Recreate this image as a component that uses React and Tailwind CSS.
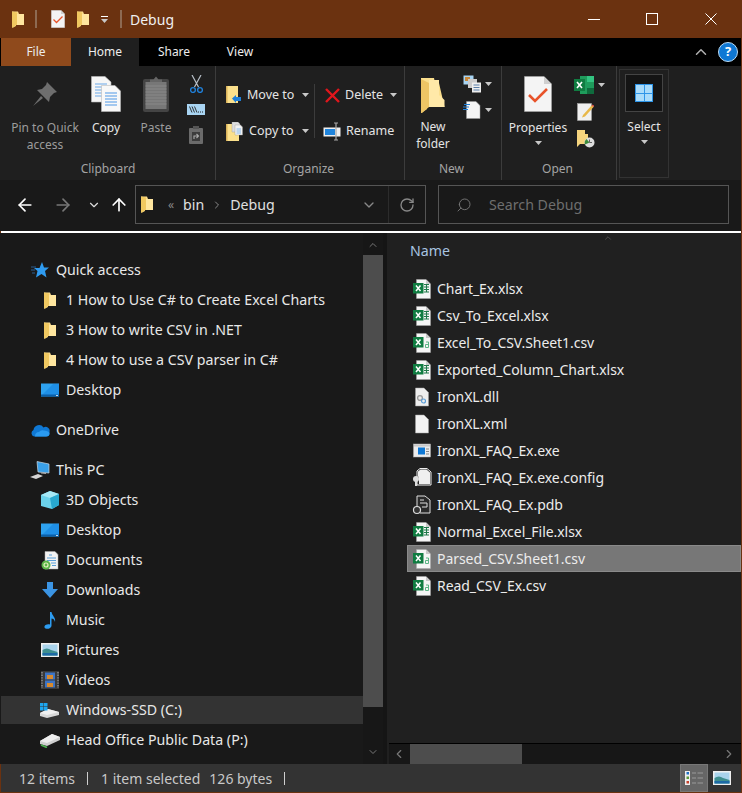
import { ChevronDown, ChevronUp, ChevronLeft, ChevronRight, ArrowLeft, ArrowRight, ArrowUp, RotateCw, Search } from 'lucide-react';

const FONT = "font-['Noto_Sans',sans-serif]";

// small icons
const Folder = ({ className = 'w-[12px] h-[17px]' }) => (
  <svg viewBox="0 0 12 17" className={className}>
    <path d="M0 0.5 H6 L7 3 H12 V14 H4 V15 L1 16.5 H0 Z" fill="#fbdc8a" />
    <path d="M0 0.5 L5 1.5 V13.5 L1 16.5 H0 Z" fill="#f0c860" />
    <path d="M5 3 H12 V14 H5 Z" fill="#ffe69f" />
  </svg>
);

const Caret = ({ className = '' }) => (
  <svg viewBox="0 0 7 4" className={`w-[7px] h-[4px] ${className}`}>
    <path d="M0 0 H7 L3.5 4 Z" fill="#c8c8c8" />
  </svg>
);

const ExcelFile = ({ csv }) => (
  <svg viewBox="0 0 18 20" className="w-[18px] h-[20px]">
    <path d="M3.5 0.5 H13 L17.5 5 V19.5 H3.5 Z" fill="#f5f5f5" stroke="#a8a8a8" strokeWidth="0.5" />
    <path d="M13 0.5 V5 H17.5 Z" fill="#c8c8c8" />
    {csv ? (
      <path d="M13 9 H15.5 V14.5 H12.5 V11.5 H15.5" fill="none" stroke="#5cb585" strokeWidth="1" />
    ) : (
      <path d="M11 5.5 H16 M11 8 H16 M11 10.5 H16 M11 13 H16 M13.5 5.5 V13" stroke="#21794a" strokeWidth="1.1" fill="none" />
    )}
    <rect x="0" y="4" width="10.5" height="10.5" fill="#107c41" />
    <path d="M3 6.5 L7.5 12 M7.5 6.5 L3 12" stroke="#fff" strokeWidth="1.5" />
  </svg>
);

const DllFile = () => (
  <svg viewBox="0 0 18 20" className="w-[18px] h-[20px]">
    <path d="M2.5 1 H11 L15.5 5.5 V19 H2.5 Z" fill="#eeeeee" stroke="#a0a0a0" strokeWidth="0.5" />
    <circle cx="7" cy="11" r="2.4" fill="none" stroke="#9a9a9a" strokeWidth="1.3" />
    <circle cx="10.5" cy="14" r="2" fill="none" stroke="#5c9fd8" strokeWidth="1.2" />
  </svg>
);

const BlankFile = () => (
  <svg viewBox="0 0 18 20" className="w-[18px] h-[20px]">
    <path d="M2.5 1 H11 L15.5 5.5 V19 H2.5 Z" fill="#f2f2f2" stroke="#a0a0a0" strokeWidth="0.5" />
  </svg>
);

const ExeFile = () => (
  <svg viewBox="0 0 18 20" className="w-[18px] h-[20px]">
    <rect x="0.5" y="3" width="17" height="13" fill="#ececec" stroke="#b0b0b0" strokeWidth="0.5" />
    <rect x="1" y="3.5" width="16" height="2" fill="#c8c8c8" />
    <rect x="5" y="6.5" width="7" height="7" fill="#0f78d4" />
    <path d="M13 8 H16 M13 10.5 H16 M13 13 H16" stroke="#888" />
  </svg>
);

const ConfigFile = () => (
  <svg viewBox="0 0 20 20" className="w-[20px] h-[20px]">
    <path d="M5 10 V3 L8 0.5 H15 L19 4 V17 H5 Z" fill="#222" stroke="#eee" strokeWidth="1" />
    <path d="M6 8 V3.5 L8.5 1.5 H14.5 L18 4.5 V16 H7 V11 Z" fill="#efefef" />
    <circle cx="4" cy="11" r="3" fill="#ddd" />
    <rect x="3" y="12" width="2" height="6" fill="#ddd" />
  </svg>
);

const PdbFile = () => (
  <svg viewBox="0 0 20 20" className="w-[20px] h-[20px]">
    <path d="M5 13 V1 H13 L18 5 V18 H8" fill="#2a2a2a" stroke="#ddd" strokeWidth="1" />
    <path d="M8 5 H12 M8 8 H15 V12 H10" stroke="#ddd" strokeWidth="1" fill="none" />
    <circle cx="5" cy="15" r="3.5" fill="#333" stroke="#ddd" strokeWidth="1.2" />
  </svg>
);

const Star = () => (
  <svg viewBox="0 0 18 16" className="w-[18px] h-[16px]">
    <path d="M11 0 L13 5.5 H18 L14 9 L15.5 15.5 L10.5 12 L5 15.5 L6.5 9 L3 6 H8.5 Z" fill="#2f9bf0" />
    <path d="M0 5 H5 M0 8 H4 M1 11 H4" stroke="#2f6fb0" strokeWidth="0.8" />
  </svg>
);

const DesktopIcon = () => (
  <svg viewBox="0 0 18 14" className="w-[18px] h-[14px]">
    <rect width="18" height="13" y="0.5" fill="#2ea2f0" />
    <path d="M0 13 L12 1 H18 V13 Z" fill="#1f8fe6" />
    <rect y="11.5" width="18" height="2" fill="#0a5ea8" />
    <path d="M15 12.5 H17" stroke="#fff" strokeWidth="0.8" />
  </svg>
);

const Cloud = () => (
  <svg viewBox="0 0 20 13" className="w-[20px] h-[13px]">
    <path d="M4 12.5 A3.5 3.5 0 0 1 3.5 6 A5.5 5.5 0 0 1 13.5 3.5 A4 4 0 0 1 19.5 8 Q20 12.5 16 12.5 Z" fill="#0f78d4" />
    <path d="M5 12.5 Q5 8 9 8 Q11 5.5 14 6.5 Q20 7 19.5 10 Q19 12.5 16 12.5 Z" fill="#2a9af0" />
  </svg>
);

const PcIcon = () => (
  <svg viewBox="0 0 20 18" className="w-[20px] h-[18px]">
    <path d="M7 0.5 L19 3 V12 L8 11 Z" fill="#3aa0e8" stroke="#cfd8e0" strokeWidth="0.7" />
    <path d="M0 16 L8 13 L13 15 L6 18 Z" fill="#d5d5d5" />
    <path d="M11 12 L16 12.5" stroke="#aaa" />
  </svg>
);

const CubeIcon = () => (
  <svg viewBox="0 0 18 18" className="w-[18px] h-[18px]">
    <path d="M9 0 L18 3 V14 L11 18 L0 15 V4 Z" fill="#6bd2ea" />
    <path d="M0 4 L9 7 L18 3 L9 0 Z" fill="#a6e8f5" />
    <path d="M9 7 L18 3 V14 L11 18 Z" fill="#28a8cf" />
  </svg>
);

const DocumentsIcon = () => (
  <svg viewBox="0 0 18 19" className="w-[18px] h-[19px]">
    <path d="M4 0.5 H14 L17 3.5 V18 H4 Z" fill="#f2f2f2" stroke="#aaa" strokeWidth="0.5" />
    <path d="M8 4 H11 M6 7 H15 M6 9.5 H15 M10 12 H15 M11 14.5 H15" stroke="#5a9fd8" strokeWidth="1.1" />
    <circle cx="5" cy="14" r="4.5" fill="#5ab54a" />
    <circle cx="5" cy="14" r="2" fill="none" stroke="#e4f2c0" strokeWidth="1.2" />
  </svg>
);

const DownloadsIcon = () => (
  <svg viewBox="0 0 16 16" className="w-[16px] h-[16px]">
    <path d="M5 0 H11 V7 H16 L8 16 L0 7 H5 Z" fill="#3b94e3" />
  </svg>
);

const MusicIcon = () => (
  <svg viewBox="0 0 12 17" className="w-[12px] h-[17px]">
    <path d="M6 0 H7.5 C8 4 12 5 11 10 C10.5 7.5 9 6.5 7.5 6.5 V13.5 C7.5 16 4.5 17 2.5 16.8 C0 16.5 0 14 1.5 13 C3 12 5 12 6 12.5 Z" fill="#2d9cf0" />
  </svg>
);

const PictureIcon = ({ className = 'w-[18px] h-[14px]' }) => (
  <svg viewBox="0 0 18 14" className={className}>
    <rect width="18" height="14" fill="#f0f0f0" />
    <rect x="1.5" y="1.5" width="15" height="11" fill="#a9d3ec" />
    <path d="M1.5 7 Q6 4 10 7 L16.5 9 V12.5 H1.5 Z" fill="#3f8f8f" />
    <path d="M1.5 10 L16.5 10 V12.5 H1.5 Z" fill="#1d6aa6" />
  </svg>
);

const VideoIcon = () => (
  <svg viewBox="0 0 18 18" className="w-[18px] h-[18px]">
    <rect width="18" height="18" fill="#3a3a3a" />
    <path d="M1 1 V17 M17 1 V17" stroke="#888" strokeWidth="1.6" strokeDasharray="1.4 1.2" />
    <rect x="4" y="1.5" width="10" height="7" fill="#3d74c4" />
    <rect x="4" y="9.5" width="10" height="7" fill="#3d74c4" />
    <rect x="6" y="4" width="6" height="4" fill="#d98a2c" />
    <rect x="6" y="12" width="6" height="4" fill="#d98a2c" />
  </svg>
);

const DriveC = () => (
  <svg viewBox="0 0 20 15" className="w-[20px] h-[15px]">
    <path d="M0 10 L8 6 L19 9 V12 L7 15 L0 13 Z" fill="#d8d8d8" />
    <path d="M0 10 L7 12 L19 9 L8 6 Z" fill="#f0f0f0" />
    <rect x="0" y="0" width="3.5" height="3.5" fill="#1ea6ef" />
    <rect x="4" y="0" width="3.5" height="3.5" fill="#1ea6ef" />
    <rect x="0" y="4" width="3.5" height="3.5" fill="#1ea6ef" />
    <rect x="4" y="4" width="3.5" height="3.5" fill="#1ea6ef" />
  </svg>
);

const DriveP = () => (
  <svg viewBox="0 0 20 15" className="w-[20px] h-[15px]">
    <path d="M0 8 L12 1 L20 4 V7 L7 13 L0 11 Z" fill="#cfcfcf" />
    <path d="M0 8 L7 10 L20 4 L12 1 Z" fill="#eeeeee" />
    <path d="M1 12 L7 14.5" stroke="#4caf50" strokeWidth="1.8" />
  </svg>
);

// ribbon icons
const PinIcon = () => (
  <svg viewBox="0 0 26 26" className="w-[26px] h-[26px]">
    <path d="M15 1 L25 11 L22 12 L18 16 L17 21 L5 9 L10 8 L14 4 Z M9 15 L11 17 L1 25 Z" fill="#6e6e6e" />
  </svg>
);

const CopyIcon = () => (
  <svg viewBox="0 0 30 36" className="w-[30px] h-[36px]">
    <path d="M0.5 0.5 H14 L20 6 V26 H0.5 Z" fill="#f6f6f6" stroke="#bbb" strokeWidth="0.6" />
    <path d="M4 8 H16 M4 11 H16 M4 14 H16 M4 17 H16 M4 20 H16" stroke="#6aa8e8" strokeWidth="1.2" />
    <path d="M10.5 9.5 H24 L29.5 15 V35.5 H10.5 Z" fill="#f8f8f8" stroke="#bbb" strokeWidth="0.6" />
    <path d="M14 17 H26 M14 20 H26 M14 23 H26 M14 26 H26 M14 29 H26" stroke="#4f97e6" strokeWidth="1.2" />
  </svg>
);

const PasteIcon = () => (
  <svg viewBox="0 0 26 36" className="w-[26px] h-[36px]">
    <rect x="0" y="3" width="26" height="33" rx="2" fill="#444" />
    <rect x="2.5" y="6" width="21" height="27" fill="#777" />
    <path d="M2.5 10 H23.5 M2.5 13 H23.5 M2.5 16 H23.5 M2.5 19 H23.5 M2.5 22 H23.5 M2.5 25 H23.5 M2.5 28 H23.5" stroke="#8a8a8a" />
    <path d="M7 6 V3.5 H10.5 L13 0.5 L15.5 3.5 H19 V6 Z" fill="#666" />
  </svg>
);

const CutIcon = () => (
  <svg viewBox="0 0 13 18" className="w-[13px] h-[18px]">
    <path d="M2 0 L8.5 12 M11 0 L4.5 12" stroke="#b8c0c8" strokeWidth="1.2" />
    <circle cx="3" cy="15" r="2.4" fill="none" stroke="#1f7fd8" strokeWidth="1.4" />
    <circle cx="10" cy="15" r="2.4" fill="none" stroke="#1f7fd8" strokeWidth="1.4" />
  </svg>
);

const CopyPathIcon = () => (
  <svg viewBox="0 0 18 11" className="w-[18px] h-[11px]">
    <rect width="18" height="11" fill="#a8d4f2" />
    <path d="M2.5 2.5 L5 8.5 M5 2.5 L7.5 8.5 M7.5 2.5 L10 8.5" stroke="#222" strokeWidth="0.9" />
    <path d="M11 8 H12 M13 8 H14 M15 8 H16" stroke="#222" />
  </svg>
);

const PasteShortcutIcon = () => (
  <svg viewBox="0 0 14 18" className="w-[14px] h-[18px]">
    <rect y="2" width="14" height="16" rx="1" fill="#6b6b6b" />
    <rect x="4" y="0" width="6" height="3" fill="#555" />
    <rect x="3" y="6" width="8" height="9" fill="#3c3c3c" />
    <path d="M5 13 V10 H9 M7.5 8 L9.5 10 L7.5 12" stroke="#aaa" strokeWidth="1.1" fill="none" />
  </svg>
);

const MoveToIcon = () => (
  <svg viewBox="0 0 15 18" className="w-[15px] h-[18px]">
    <path d="M0 0 H12 V17 H0 Z" fill="#fbe08c" />
    <path d="M0 0 H1.5 V17 H0 Z" fill="#d9b25a" />
    <path d="M6 12.5 L10 9 V11 H15 V15 H10 V17 Z" fill="#1f7fd8" />
  </svg>
);

const CopyToIcon = () => (
  <svg viewBox="0 0 17 19" className="w-[17px] h-[19px]">
    <path d="M0 2 H13 V19 H0 Z" fill="#fbe08c" />
    <path d="M0 2 H1.5 V19 H0 Z" fill="#d9b25a" />
    <path d="M6 0 H12 L14 2 V10 H6 Z" fill="#ddd" stroke="#999" strokeWidth="0.4" />
    <path d="M9 3 H14.5 L16.5 5 V13 H9 Z" fill="#f2f2f2" stroke="#999" strokeWidth="0.4" />
    <path d="M10.5 7 H15 M10.5 9 H15 M10.5 11 H15" stroke="#6aa8e8" strokeWidth="0.8" />
  </svg>
);

const DeleteIcon = () => (
  <svg viewBox="0 0 15 15" className="w-[15px] h-[15px]">
    <path d="M1 1 L14 14 M14 1 L1 14" stroke="#e0161c" strokeWidth="2.4" />
  </svg>
);

const RenameIcon = () => (
  <svg viewBox="0 0 18 19" className="w-[18px] h-[19px]">
    <rect x="0.5" y="5.5" width="17" height="9" fill="#efefef" />
    <rect x="2" y="7" width="10" height="6" fill="#1f84dc" />
    <path d="M11 1 H15 M13 1 V18 M11 18 H15" stroke="#a8a8a8" strokeWidth="1.2" />
  </svg>
);

const NewFolderIcon = () => (
  <svg viewBox="0 0 24 36" className="w-[24px] h-[36px] mt-[5px]">
    <path d="M0 0 H13 L14 5 H18 L23.5 29 H6 V31 L0 35 Z" fill="#fbdf8e" />
    <path d="M0 1 L8 5 V29 L1 35 H0 Z" fill="#eec565" />
    <path d="M8 2 H18 V17 L23.5 22 V29 H8 Z" fill="#ffe9a8" />
  </svg>
);

const NewItemIcon = () => (
  <svg viewBox="0 0 18 18" className="w-[18px] h-[18px]">
    <rect x="0.5" y="0.5" width="10" height="9" fill="#a8d4f2" />
    <rect x="2" y="2" width="5" height="4" fill="#c7883a" />
    <rect x="5" y="4" width="9" height="9" fill="#ccc" />
    <rect x="9" y="7.5" width="9" height="10" fill="#eee" />
    <path d="M10.5 10 H16.5 M10.5 12.5 H16.5 M10.5 15 H16.5" stroke="#5a7fa8" />
  </svg>
);

const EasyAccessIcon = () => (
  <svg viewBox="0 0 18 18" className="w-[18px] h-[18px]">
    <path d="M3.5 0.5 H13 L17 4.5 V17.5 H3.5 Z" fill="#f4f4f4" stroke="#999" strokeWidth="0.5" />
    <path d="M1 3.5 H7 M0 6 H6 M0 8.5 H5" stroke="#1f7fd8" strokeWidth="1.1" />
  </svg>
);

const PropertiesIcon = ({ className = 'w-[28px] h-[36px]' }) => (
  <svg viewBox="0 0 28 36" className={className}>
    <path d="M0.5 0.5 H20 L27.5 8 V35.5 H0.5 Z" fill="#f4f4f4" stroke="#aaa" strokeWidth="0.6" />
    <path d="M20 0.5 V8 H27.5 Z" fill="#cfcfcf" />
    <path d="M5 19 L11 25 L23 13" fill="none" stroke="#e8532a" strokeWidth="2.6" />
  </svg>
);

const ExcelApp = () => (
  <svg viewBox="0 0 20 18" className="w-[20px] h-[18px]">
    <rect x="6" y="0" width="14" height="18" fill="#1f9c5c" />
    <rect x="13" y="0" width="7" height="6" fill="#33c481" />
    <rect x="13" y="12" width="7" height="6" fill="#0f6b3d" />
    <rect x="0" y="3" width="11" height="12" fill="#107c41" />
    <path d="M3 6 L8 12 M8 6 L3 12" stroke="#fff" strokeWidth="1.6" />
  </svg>
);

const EditIcon = () => (
  <svg viewBox="0 0 17 18" className="w-[17px] h-[18px]">
    <rect x="0.5" y="0.5" width="14" height="17" fill="#f0f0f0" stroke="#aaa" strokeWidth="0.5" />
    <path d="M6 12 L15 2 L17 3.5 L8 13.5 L5 14.5 Z" fill="#e8b84a" />
    <path d="M15 2 L17 3.5" stroke="#d9534f" strokeWidth="1.5" />
  </svg>
);

const HistoryIcon = () => (
  <svg viewBox="0 0 18 18" className="w-[18px] h-[18px]">
    <path d="M0 0 H8 V4 H11 V14 H3 L0 17 Z" fill="#f5d47e" />
    <circle cx="12.5" cy="12.5" r="5" fill="#ddd" />
    <path d="M9.5 9 A5 5 0 0 0 8 14.5 L12.5 12.5 Z" fill="#3a8a3a" />
    <path d="M12.5 9.5 V12.5 H15" stroke="#555" strokeWidth="0.9" fill="none" />
  </svg>
);

const SelectIcon = () => (
  <div className="grid grid-cols-2 gap-px w-[18px] h-[18px] bg-[#2e95e8] p-px">
    <span className="bg-[#a9dbfa]" />
    <span className="bg-[#a9dbfa]" />
    <span className="bg-[#a9dbfa]" />
    <span className="bg-[#a9dbfa]" />
  </div>
);

const DetailsViewIcon = () => (
  <svg viewBox="0 0 18 14" className="w-[18px] h-[14px]">
    <rect width="5" height="14" fill="#eee" />
    <rect x="1.5" y="1" width="2.5" height="2.5" fill="#1f6fc4" />
    <rect x="1.5" y="5.5" width="2.5" height="2.5" fill="#5a9a3a" />
    <rect x="1.5" y="10" width="2.5" height="2.5" fill="#c8402a" />
    <path d="M7 2 H11 M12.5 2 H18 M7 7 H11 M12.5 7 H18 M7 12 H11 M12.5 12 H18" stroke="#9a9a9a" />
  </svg>
);

const CloseGlyph = () => (
  <svg viewBox="0 0 12 12" className="w-[12px] h-[12px]">
    <path d="M0.5 0.5 L11.5 11.5 M11.5 0.5 L0.5 11.5" stroke="#fff" strokeWidth="1" />
  </svg>
);

const LargeButton = ({ icon, label, width, muted, caret }) => (
  <div className={`flex flex-col items-center shrink-0 ${width}`}>
    <div className="h-[46px] pb-[4px] flex items-center justify-center">{icon}</div>
    <div className={`text-[12px] leading-[17px] text-center ${muted ? 'text-[#9c9c9c]' : 'text-[#e4e4e4]'}`}>
      {label}
    </div>
    {caret && <Caret className="mt-[5px]" />}
  </div>
);

const RibbonGroup = ({ label, width, children, labelClass = 'pr-[3px]' }) => (
  <div className={`flex flex-col shrink-0 h-full border-r border-[#3c3c3c] ${width}`}>
    <div className="flex-1 flex min-h-0 pt-[7px]">{children}</div>
    <div className={`h-[19px] mb-[2px] text-[12px] leading-[19px] text-center text-[#a4a4a4] ${labelClass}`}>{label}</div>
  </div>
);

const navTop = [
  { label: 'Quick access', icon: <Star />, top: true },
  { label: '1 How to Use C# to Create Excel Charts', icon: <Folder /> },
  { label: '3 How to write CSV in .NET', icon: <Folder /> },
  { label: '4 How to use a CSV parser in C#', icon: <Folder /> },
  { label: 'Desktop', icon: <DesktopIcon /> },
];

const navPc = [
  { label: '3D Objects', icon: <CubeIcon /> },
  { label: 'Desktop', icon: <DesktopIcon /> },
  { label: 'Documents', icon: <DocumentsIcon /> },
  { label: 'Downloads', icon: <DownloadsIcon /> },
  { label: 'Music', icon: <MusicIcon /> },
  { label: 'Pictures', icon: <PictureIcon /> },
  { label: 'Videos', icon: <VideoIcon /> },
  { label: 'Windows-SSD (C:)', icon: <DriveC />, active: true },
  { label: 'Head Office Public Data (P:)', icon: <DriveP /> },
];

const files = [
  { name: 'Chart_Ex.xlsx', icon: <ExcelFile /> },
  { name: 'Csv_To_Excel.xlsx', icon: <ExcelFile /> },
  { name: 'Excel_To_CSV.Sheet1.csv', icon: <ExcelFile csv /> },
  { name: 'Exported_Column_Chart.xlsx', icon: <ExcelFile /> },
  { name: 'IronXL.dll', icon: <DllFile /> },
  { name: 'IronXL.xml', icon: <BlankFile /> },
  { name: 'IronXL_FAQ_Ex.exe', icon: <ExeFile /> },
  { name: 'IronXL_FAQ_Ex.exe.config', icon: <ConfigFile /> },
  { name: 'IronXL_FAQ_Ex.pdb', icon: <PdbFile /> },
  { name: 'Normal_Excel_File.xlsx', icon: <ExcelFile /> },
  { name: 'Parsed_CSV.Sheet1.csv', icon: <ExcelFile csv />, selected: true },
  { name: 'Read_CSV_Ex.csv', icon: <ExcelFile csv /> },
];

const NavRow = ({ item }) => (
  <div className={`flex items-center ${item.active ? 'h-[28px] my-px bg-[#333333]' : 'h-[30px]'} ${item.top ? 'pl-[29px]' : 'pl-[39px]'}`}>
    <div className="w-[20px] flex justify-center shrink-0">{item.icon}</div>
    <span className="ml-[6px] text-[14.2px] text-[#e8e8e8] whitespace-nowrap">{item.label}</span>
  </div>
);

export default function App() {
  return (
    <div className={`w-[742px] h-[793px] bg-[#6b3210] flex flex-col overflow-hidden pb-px pr-px ${FONT}`}>
      {/* Title bar */}
      <div className="h-[38px] shrink-0 flex items-center pl-[12px] text-[#f0f0f0]">
        <Folder />
        <div className="w-[2px] h-[18px] bg-[#8d6a52] ml-[11px]" />
        <PropertiesIcon className="w-[14px] h-[18px] ml-[14px]" />
        <div className="ml-[12px]"><Folder /></div>
        <div className="ml-[12px] flex flex-col items-center gap-[2px]">
          <div className="w-[7px] h-px bg-white" />
          <Caret />
        </div>
        <div className="w-[2px] h-[18px] bg-[#8d6a52] ml-[12px]" />
        <span className="ml-[8px] text-[14px]">Debug</span>
        <div className="ml-auto flex items-center pr-[24px]">
          <div className="w-[12px] h-px bg-white" />
          <div className="w-[12px] h-[12px] border border-white ml-[46px]" />
          <div className="ml-[47px]"><CloseGlyph /></div>
        </div>
      </div>

      {/* Tabs */}
      <div className="h-[28px] shrink-0 bg-black flex items-stretch pl-px text-[12px] text-[#ededed]">
        <div className="w-[70px] bg-[#8f4a1c] flex items-center justify-center">File</div>
        <div className="w-[68px] bg-[#1f1f1f] flex items-center justify-center">Home</div>
        <div className="w-[70px] flex items-center justify-center">Share</div>
        <div className="w-[62px] flex items-center justify-center">View</div>
        <div className="ml-auto flex items-center pr-[3px] gap-[8px]">
          <ChevronUp className="w-[18px] h-[18px] text-[#b0b0b0]" />
          <div className="w-[20px] h-[20px] rounded-full bg-[#0f78d4] border border-[#bcdcf5] flex items-center justify-center text-white text-[13px] font-bold">?</div>
        </div>
      </div>

      {/* Ribbon */}
      <div className="h-[114px] shrink-0 bg-[#1f1f1f] flex pl-px text-[#e4e4e4]">
        <RibbonGroup label="Clipboard" width="w-[215px]" labelClass="">
          <div className="flex ml-[9px]">
            <LargeButton icon={<PinIcon />} label={<>Pin to Quick<br />access</>} width="w-[70px]" muted />
            <LargeButton icon={<CopyIcon />} label="Copy" width="w-[52px]" />
            <LargeButton icon={<PasteIcon />} label="Paste" width="w-[48px]" muted />
          </div>
          <div className="flex flex-col items-center ml-[7px] w-[18px] gap-[11px] pt-[2px]">
            <CutIcon />
            <CopyPathIcon />
            <PasteShortcutIcon />
          </div>
        </RibbonGroup>
        <RibbonGroup label="Organize" width="w-[189px]">
          <div className="flex flex-col pl-[10px] pt-[2px] gap-[18px] w-[88px] h-[52px] mt-[11px] border-r border-[#3c3c3c] box-content">
            <div className="flex items-center gap-[6px] h-[18px] text-[12.5px] whitespace-nowrap">
              <MoveToIcon />Move to<Caret className="ml-[2px]" />
            </div>
            <div className="flex items-center gap-[6px] h-[18px] text-[12.5px] whitespace-nowrap">
              <CopyToIcon />Copy to<Caret className="ml-[2px]" />
            </div>
          </div>
          <div className="flex flex-col pl-[8px] pt-[13px] gap-[18px]">
            <div className="flex items-center gap-[5px] h-[18px] text-[12.5px] whitespace-nowrap pl-[2px]">
              <DeleteIcon />Delete<Caret className="ml-[2px]" />
            </div>
            <div className="flex items-center gap-[5px] h-[18px] text-[12.5px] whitespace-nowrap">
              <RenameIcon />Rename
            </div>
          </div>
        </RibbonGroup>
        <RibbonGroup label="New" width="w-[97px]">
          <div className="ml-px -mt-px">
            <LargeButton icon={<NewFolderIcon />} label={<>New<br />folder</>} width="w-[54px]" />
          </div>
          <div className="flex flex-col ml-[3px] pt-[2px] gap-[8px]">
            <div className="flex items-center gap-[4px]"><NewItemIcon /><Caret /></div>
            <div className="flex items-center gap-[4px]"><EasyAccessIcon /><Caret /></div>
          </div>
        </RibbonGroup>
        <RibbonGroup label="Open" width="w-[115px]">
          <div className="ml-px">
            <LargeButton icon={<PropertiesIcon />} label="Properties" width="w-[70px]" caret />
          </div>
          <div className="flex flex-col pt-[3px] gap-[9px] ml-px">
            <div className="flex items-center gap-[4px]"><ExcelApp /><Caret /></div>
            <div className="pl-[3px]"><EditIcon /></div>
            <div className="pl-[3px]"><HistoryIcon /></div>
          </div>
        </RibbonGroup>
        <div className="ml-[2px] mt-[3px] mb-[2px] w-[50px] border border-[#333333] flex flex-col items-center pt-[4px] shrink-0">
          <div className="w-[38px] h-[38px] bg-[#141414] border border-[#444444] flex items-center justify-center">
            <SelectIcon />
          </div>
          <div className="text-[12px] leading-[17px] mt-[6px]">Select</div>
          <Caret className="mt-[5px]" />
        </div>
      </div>

      {/* Address bar */}
      <div className="h-[51px] shrink-0 bg-[#191919] flex items-center pl-[15px] border-b-[2px] border-[#191919]">
        <ArrowLeft className="w-[20px] h-[20px] text-white" strokeWidth={2} />
        <ArrowRight className="w-[20px] h-[20px] text-[#777777] ml-[18px]" strokeWidth={2} />
        <ChevronDown className="w-[14px] h-[14px] text-[#dddddd] ml-[14px]" strokeWidth={2} />
        <ArrowUp className="w-[20px] h-[20px] text-white ml-[8px]" strokeWidth={2} />
        <div className="ml-[6px] w-[291px] h-[39px] border border-[#555555] flex items-center pl-[5px] text-[14.2px] text-[#e0e0e0]">
          <Folder />
          <span className="ml-[15px] text-[#888888] text-[12px]">«</span>
          <span className="ml-[9px]">bin</span>
          <ChevronRight className="w-[12px] h-[12px] text-[#888888] ml-[7px]" />
          <span className="ml-[7px]">Debug</span>
          <ChevronDown className="w-[16px] h-[16px] text-[#888888] ml-auto mr-[11px]" />
          <div className="w-px h-full bg-[#2c2c2c]" />
          <RotateCw className="w-[16px] h-[16px] text-[#888888] mx-[10px]" />
        </div>
        <div className="ml-[12px] w-[291px] h-[39px] border border-[#555555] flex items-center pl-[17px] text-[14.2px] text-[#6e6e6e]">
          <Search className="w-[16px] h-[16px] text-[#777777] -scale-x-100" strokeWidth={1.4} />
          <span className="ml-[17px]">Search Debug</span>
        </div>
      </div>

      <div className="h-[2px] shrink-0 bg-white ml-px" />

      {/* Main */}
      <div className="flex-1 min-h-0 flex pl-px bg-[#191919]">
        {/* Nav pane */}
        <div className="w-[362px] shrink-0 pt-[22px] bg-[#191919]">
          {navTop.map((item, i) => <NavRow key={i} item={item} />)}
          <div className="h-[10px]" />
          <NavRow item={{ label: 'OneDrive', icon: <Cloud />, top: true }} />
          <div className="h-[10px]" />
          <NavRow item={{ label: 'This PC', icon: <PcIcon />, top: true }} />
          {navPc.map((item, i) => <NavRow key={i} item={item} />)}
        </div>

        {/* Nav scrollbar */}
        <div className="w-[20px] shrink-0 flex flex-col items-center bg-[#171717]">
          <ChevronUp className="w-[12px] h-[12px] text-[#777777] mt-[6px]" />
          <div className="w-full h-[452px] bg-[#4d4d4d] mt-[4px]" />
          <ChevronDown className="w-[12px] h-[12px] text-[#777777] mt-auto mb-[6px]" />
        </div>
        <div className="w-[4px] shrink-0 bg-[#151515]" />

        {/* File pane */}
        <div className="flex-1 min-w-0 flex flex-col bg-[#202020] relative">
          <ChevronUp className="absolute left-[214px] top-0 w-[14px] h-[10px] text-[#8a8a8a]" strokeWidth={1} />
          <div className="h-[36px] shrink-0 flex items-center pl-[23px] text-[14.2px] text-[#a8c4e0]">Name</div>
          <div className="flex-1 min-h-0 pt-[6px] pl-[20px]">
            {files.map((file) => (
              <div
                key={file.name}
                className={`h-[27px] flex items-center pl-[4px] border ${file.selected ? 'bg-[#777777] border-[#8a8a8a]' : 'border-transparent'}`}
              >
                <div className="w-[20px] flex justify-center shrink-0">{file.icon}</div>
                <span className="ml-[5px] text-[14px] tracking-[-0.05px] text-[#ececec] whitespace-nowrap">{file.name}</span>
              </div>
            ))}
          </div>
          <div className="h-[21px] shrink-0 ml-[2px] bg-[#171717] border-t border-black flex items-center">
            <ChevronLeft className="w-[14px] h-[14px] text-[#777777] ml-[3px]" />
            <div className="ml-[4px] w-[112px] h-full bg-[#4d4d4d]" />
            <ChevronRight className="w-[14px] h-[14px] text-[#777777] ml-auto mr-[5px]" />
          </div>
        </div>
      </div>

      {/* Status bar */}
      <div className="h-[28px] shrink-0 ml-px bg-[#333333] flex items-center pl-[18px] text-[14px] text-[#c8c8c8]">
        <span>12 items</span>
        <div className="w-px h-[13px] bg-[#cfcfcf] ml-[12px]" />
        <span className="ml-[13px]">1 item selected</span>
        <span className="ml-[9px]">126 bytes</span>
        <div className="w-px h-[13px] bg-[#cfcfcf] ml-[12px]" />
        <div className="ml-auto flex items-stretch h-full pr-[10px]">
          <div className="w-[28px] bg-[#666666] border border-[#777777] flex items-center justify-center"><DetailsViewIcon /></div>
          <div className="ml-[5px] flex items-center"><PictureIcon /></div>
        </div>
      </div>
    </div>
  );
}
